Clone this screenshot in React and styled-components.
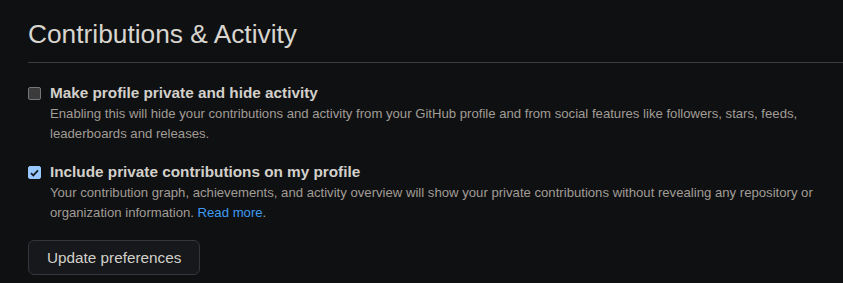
import React from "react"
import styled, { createGlobalStyle } from "styled-components"

const colors = {
  bg: "#0f1012",
  heading: "#d8d5cf",
  label: "#d3d0ca",
  muted: "#a19c95",
  rule: "#3a3d41",
  link: "#3d9cf0",
  btnBg: "#16181b",
  btnBorder: "#33363b",
}

const GlobalStyle = createGlobalStyle`
  html, body {
    margin: 0;
    padding: 0;
    background: ${colors.bg};
    overflow: hidden;
  }
  body {
    font-family: "Liberation Sans", Arial, sans-serif;
    color: ${colors.label};
  }
`

const Page = styled.div`
  padding: 16px 0 0 28px;
  min-height: 283px;
  box-sizing: border-box;
`

const Header = styled.div`
  border-bottom: 1px solid ${colors.rule};
  padding-bottom: 10px;
  margin-bottom: 19px;
`

const Title = styled.h2`
  margin: 0;
  font-size: 26.3px;
  font-weight: 400;
  line-height: 36px;
  color: ${colors.heading};
`

const Option = styled.div`
  display: flex;
  align-items: flex-start;
  gap: 9px;

  & + & {
    margin-top: 17px;
  }
`

const Box = styled.span`
  flex: none;
  width: 13px;
  height: 13px;
  margin-top: 5px;
  box-sizing: border-box;
  border-radius: 2px;
  display: flex;
  align-items: center;
  justify-content: center;
  background: ${(p) => (p.$checked ? "#99c8ff" : "#3b3b3b")};
  border: 1px solid ${(p) => (p.$checked ? "#99c8ff" : "#767676")};
`

const Body = styled.div`
  display: flex;
  flex-direction: column;
`

const Label = styled.label`
  font-size: 15.3px;
  font-weight: 700;
  line-height: 22px;
  color: ${colors.label};
`

const Note = styled.p`
  margin: 0;
  font-size: 13.15px;
  line-height: 20px;
  color: ${colors.muted};
`

const Link = styled.a`
  color: ${colors.link};
  text-decoration: none;
`

const Button = styled.button`
  display: block;
  font-family: inherit;
  font-size: 15.3px;
  color: ${colors.label};
  background: ${colors.btnBg};
  border: 1px solid ${colors.btnBorder};
  border-radius: 6px;
  height: 35px;
  padding: 0 18px;
  margin-top: 17px;
`

const Check = ({ checked }) => (
  <Box $checked={checked}>
    {checked && (
      <svg width="9" height="8" viewBox="0 0 9 8">
        <path d="M1 4.2 L3.3 6.4 L8 1.3" fill="none" stroke="#1b1c1e" strokeWidth="1.8" />
      </svg>
    )}
  </Box>
)

export default function App() {
  return (
    <>
      <GlobalStyle />
      <Page>
        <Header>
          <Title>Contributions &amp; Activity</Title>
        </Header>
        <Option>
          <Check checked={false} />
          <Body>
            <Label>Make profile private and hide activity</Label>
            <Note>
              Enabling this will hide your contributions and activity from your GitHub profile and from social features like followers, stars, feeds, leaderboards and releases.
            </Note>
          </Body>
        </Option>
        <Option>
          <Check checked />
          <Body>
            <Label>Include private contributions on my profile</Label>
            <Note>
              Your contribution graph, achievements, and activity overview will show your private contributions without revealing any repository or organization information. <Link href="#">Read more</Link>.
            </Note>
          </Body>
        </Option>
        <Button>Update preferences</Button>
      </Page>
    </>
  )
}
